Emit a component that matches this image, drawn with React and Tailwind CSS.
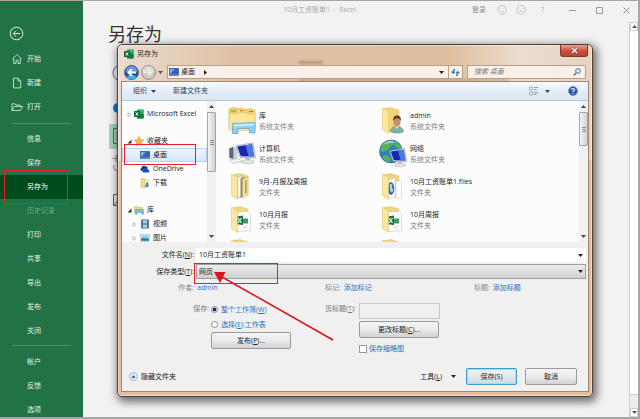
import { useState } from 'react';

const navTop = [
  { label: '开始', icon: 'home' },
  { label: '新建', icon: 'file' },
  { label: '打开', icon: 'open' },
];
const navMain = ['信息', '保存', '另存为', '历史记录', '打印', '共享', '导出', '发布', '关闭'];
const navBottom = ['帐户', '反馈', '选项'];

const files = [
  { name: '库', type: '系统文件夹', icon: 'library' },
  { name: 'admin', type: '系统文件夹', icon: 'user' },
  { name: '计算机', type: '系统文件夹', icon: 'computer' },
  { name: '网络', type: '系统文件夹', icon: 'network' },
  { name: '9月-月报及周报', type: '文件夹', icon: 'folders' },
  { name: '10月工资账单1.files', type: '文件夹', icon: 'web' },
  { name: '10月月报', type: '文件夹', icon: 'excel' },
  { name: '10月周报', type: '文件夹', icon: 'excel' },
];

function Caret({ dir = 'down' }) {
  const paths = { down: 'M0 1h5L2.500 4z', up: 'M0 4h5L2.500 1z', right: 'M1 0v5l3-2.500z' };
  return (
    <svg viewBox="0 0 5 5" className="h-[5px] w-[5px] shrink-0" fill="currentColor">
      <path d={paths[dir]} />
    </svg>
  );
}

function NavIcon({ name }) {
  return (
    <svg viewBox="0 0 12 12" className="h-3 w-3 shrink-0" fill="none" stroke="#c9e6d4" strokeWidth="0.9">
      {name === 'home' && <path d="M1.500 6 6 1.500 10.500 6M2.700 5.200v5.300h2.300V7.300h2v3.200h2.300V5.200" />}
      {name === 'file' && <path d="M2.500 1.200h4.500l2.700 2.700v7H2.500zM7 1.200v2.700h2.700" />}
      {name === 'open' && <path d="M1 9.500V2.800h3l1 1.200h4v1.400M1 9.500 3.300 5.400H11.500L9.300 9.500z" />}
    </svg>
  );
}

function ExcelIcon() {
  return (
    <svg viewBox="0 0 10 10" className="h-[10px] w-[10px] shrink-0">
      <rect x="3" y="0.500" width="6.700" height="9" rx="0.700" fill="#21a366" />
      <path d="M6.300 0.500h2.700a.7.700 0 0 1 .7.700v1.600H6.300z" fill="#33c481" />
      <path d="M3 5h6.700v3.800a.7.700 0 0 1-.7.700H3.700a.7.700 0 0 1-.7-.7z" fill="#107c41" />
      <rect x="0" y="2" width="6" height="6" rx="0.600" fill="#0d6b38" />
      <path d="M1.700 3.300 4.300 6.700M4.300 3.300 1.700 6.700" stroke="#fff" strokeWidth="0.900" />
    </svg>
  );
}

function TreeIcon({ name }) {
  if (name === 'excel') return <ExcelIcon />;
  return (
    <svg viewBox="0 0 10 10" className="h-[10px] w-[10px] shrink-0">
      {name === 'star' && (
        <path d="M5 .5 6.400 3.700 9.800 4 7.200 6.200 8 9.600 5 7.800 2 9.600 2.800 6.200.2 4 3.600 3.700z" fill="#f9b545" stroke="#e08a1c" strokeWidth="0.500" />
      )}
      {name === 'desktop' && (
        <>
          <rect x="0.500" y="1.500" width="9" height="7" fill="#2f62b8" stroke="#1e3f7d" strokeWidth="0.600" />
          <path d="M1 2h5L1 7z" fill="#6d9ce0" />
          <path d="M1.300 3.200h1.400M1.300 5h1.400" stroke="#dce8fa" strokeWidth="0.800" />
          <path d="M.5 8h9" stroke="#8fa6c8" strokeWidth="0.900" />
        </>
      )}
      {name === 'cloud' && (
        <>
          <path d="M1.800 7A1.700 1.700 0 0 1 1.500 3.800 2.600 2.600 0 0 1 6 2.600 2 2 0 0 1 8 4.500L4 5z" fill="#0f3f9c" />
          <path d="M3.600 8.500a1.600 1.600 0 0 1 .2-3.200 2.200 2.200 0 0 1 4.100.1 1.600 1.600 0 0 1 .4 3.100z" fill="#1b4fb5" />
        </>
      )}
      {name === 'download' && (
        <>
          <path d="M1 .8h3.500L6 2v7.500H1z" fill="#f5dc86" stroke="#d6b04c" strokeWidth="0.500" />
          <path d="M4.500 2h3.800v6.500H4.500z" fill="#fbe9a8" stroke="#d6b04c" strokeWidth="0.400" />
          <path d="M6 4.500h2v2.300h1.500L7 9.700 4.500 6.800H6z" fill="#3f8fd6" />
        </>
      )}
      {name === 'library' && (
        <>
          <path d="M.5 1.500h3l.8.800h4.500v5H.5z" fill="#f3d67a" stroke="#d0a94a" strokeWidth="0.400" />
          <path d="M1.500 4.500h8v4.800H7.800V7.500H3.200v1.800H1.500z" fill="#6fbfe0" stroke="#4494bd" strokeWidth="0.400" />
        </>
      )}
      {name === 'video' && (
        <>
          <rect x="1" y="0.500" width="8" height="9" fill="#3d5f78" />
          <path d="M3 1.200h4v3.300H3zM3 5.500h4v3.300H3z" fill="#a9d2e8" />
          <path d="M1.900 1v8M8.100 1v8" stroke="#dfe9ef" strokeWidth="0.700" strokeDasharray="0.900 0.900" />
        </>
      )}
      {name === 'picture' && (
        <>
          <rect x="0.500" y="1.500" width="9" height="7" fill="#fff" stroke="#8fa9ba" strokeWidth="0.500" />
          <rect x="1.300" y="2.300" width="7.400" height="5.400" fill="#8ccdec" />
          <path d="M1.300 5.500c2-1 4 .6 7.400 0v2.200H1.300z" fill="#23769b" />
        </>
      )}
    </svg>
  );
}

function FolderBack() {
  return <path d="M5 2.500 12 1.500 20 4v19L10 26 5 24z" fill="#f0d57d" stroke="#dcbc5e" strokeWidth="0.400" />;
}

function FolderFront() {
  return <path d="M3.500 2 9.500 5.500V27.500L3.500 23.500z" fill="#fbe79d" stroke="#e0bf60" strokeWidth="0.500" />;
}

function Monitor() {
  return (
    <>
      <path d="M8 6.500 25 4 27.500 19 12 18.500z" fill="#d8dee6" stroke="#8f9bab" strokeWidth="0.600" />
      <path d="M9.300 7.500 24 5.300 26 17.500 12.800 17.200z" fill="#1428b0" />
      <path d="M17.500 6.300 24 5.300 26 17.500 20.500 17.300z" fill="#4a78e4" />
      <path d="M17 18.700h5l.5 3.300h-4.500z" fill="#b8c1cc" />
      <ellipse cx="20" cy="22.800" rx="6.500" ry="2" fill="#dfe4e9" stroke="#a0aab6" strokeWidth="0.500" />
    </>
  );
}

function FileIcon({ name }) {
  return (
    <svg viewBox="0 0 28 28" className="h-7 w-7 shrink-0">
      {name === 'library' && (
        <>
          <path d="M1 3 5 1.500 11 3v18H1z" fill="#f1d06c" stroke="#cda548" strokeWidth="0.500" />
          <path d="M9 3.500 13 2 19 3.500v18H9z" fill="#f6da7f" stroke="#cda548" strokeWidth="0.500" />
          <path d="M18 4 22 2.500 27 4.500V22h-9z" fill="#f3d272" stroke="#cda548" strokeWidth="0.500" />
          <path d="M1 7.500h9l1-1h7l1 1.500h8V25L1 24z" fill="#fae69a" stroke="#dab858" strokeWidth="0.500" />
          <path d="M3 5h5M21 5.500h4" stroke="#4d9a4d" strokeWidth="0.900" />
          <path d="M12 4.700h4" stroke="#c85a41" strokeWidth="0.900" />
          <path d="M4.500 17.500 27 16.500V27h-5.500v-4.500H10V27.500H4.500z" fill="#8fd0ee" stroke="#55a3cb" strokeWidth="0.700" />
          <path d="M5.500 18.500 26 17.500v2L5.500 20.500z" fill="#c8ebf8" />
        </>
      )}
      {name === 'user' && (
        <>
          <FolderBack />
          <FolderFront />
          <path d="M11.500 25.500c.4-4 3-5 6.500-5s6 1.500 6.500 5c-3 2-10 2-13 0z" fill="#7fb29f" stroke="#4a8371" strokeWidth="0.500" />
          <ellipse cx="18" cy="15.500" rx="3.500" ry="4.600" fill="#c69066" />
          <path d="M14.300 15c-.5-4 1.300-5.500 3.700-5.500s4.500 1.500 3.800 5.500c-1-2-2-2.800-3.800-2.800s-2.800.8-3.700 2.800z" fill="#57412e" />
          <path d="m16.500 20.500 1.500 2.300 1.500-2.300z" fill="#fff" />
        </>
      )}
      {name === 'computer' && (
        <>
          <path d="m1.500 9.500 4-1.500v12l-4-1.500z" fill="#5b6877" stroke="#3d4650" strokeWidth="0.400" />
          <path d="m5.500 8 4 1v10.500l-4 .5z" fill="#c6ced7" />
          <Monitor />
          <path d="m1 21 9-1.500 5 3-9.500 2z" fill="#eceff2" stroke="#a6afb8" strokeWidth="0.500" />
        </>
      )}
      {name === 'network' && (
        <>
          <circle cx="12" cy="12.500" r="11.500" fill="#2c7fc6" stroke="#1c5c99" strokeWidth="0.500" />
          <path d="M3 6C6 2 10 1 14 2l1 3-4 3-3 4-5 1-2-2zM3 17l5-1 4 4-2 3.500C6 22.500 4 20 3 17zM17 3l4 3 2 4-5-1-3-3z" fill="#55b355" />
          <path d="M4 6c3-4 9-5.500 14-2-5-.5-10 0-14 2z" fill="#c8e6f6" opacity="0.700" />
          <g transform="translate(3.500 6) scale(0.880)">
            <Monitor />
          </g>
        </>
      )}
      {name === 'folders' && (
        <>
          <FolderBack />
          <path d="m10 6 4-2.500v20L10 26z" fill="#fff" stroke="#b5ab8b" strokeWidth="0.500" />
          <path d="m12.500 6.500 4-2v19.500l-4 2z" fill="#8c8672" />
          <path d="m14.500 7 5.500-2v18l-5.500 3z" fill="#f5df95" stroke="#cdae58" strokeWidth="0.500" />
          <path d="m17 8.500 1.500-.5v13l-1.500.5z" fill="#a59c7c" />
          <FolderFront />
        </>
      )}
      {name === 'web' && (
        <>
          <FolderBack />
          <path d="M9 8.500 16 6v19l-7 1.500zM17 9h5.500v17H17z" fill="#fff" stroke="#b9bfc7" strokeWidth="0.500" />
          <ellipse cx="12" cy="16.500" rx="3.300" ry="6.500" fill="#2d6cb1" />
          <path d="M10.500 13c2-3 3.500 0 2.500 1.500s2 2 1 4.500-3 1-3-1z" fill="#a9d2ec" />
          <FolderFront />
        </>
      )}
      {name === 'excel' && (
        <>
          <FolderBack />
          <path d="M9 7 20 6.500l2.500 2.500v16.500L9 26.500z" fill="#fff" stroke="#bcbcb4" strokeWidth="0.500" />
          <path d="M14 13.500h6v5h-6z" fill="#3d9a65" />
          <path d="m8.500 11.500 6.500-1v9.500l-6.500-.8z" fill="#14743f" />
          <path d="m10 13 3.500 5M13.500 13l-3.500 5" stroke="#fff" strokeWidth="1.100" />
          <path d="M15 21h4M15 23h4" stroke="#c9cec9" strokeWidth="0.700" />
          <FolderFront />
        </>
      )}
    </svg>
  );
}

function Sidebar() {
  return (
    <nav className="flex w-[83px] shrink-0 flex-col overflow-hidden bg-[#217346] text-[#e4f1e9]">
      <button aria-label="返回" className="mt-[25px] ml-[9px] h-[15px] w-[15px] shrink-0">
        <svg viewBox="0 0 15 15" className="h-[15px] w-[15px]" fill="none" stroke="#e4f1e9">
          <circle cx="7.500" cy="7.500" r="6.300" />
          <path d="M11 7.500H4.500M7 4.700 4.200 7.500 7 10.300" />
        </svg>
      </button>
      <div className="mt-[6px]">
        {navTop.map((item) => (
          <a key={item.label} href="#" className="flex h-6 items-center gap-[4px] pl-[11px]">
            <NavIcon name={item.icon} />
            {item.label}
          </a>
        ))}
      </div>
      <hr className="mx-3 mt-1 mb-[3px] border-[#439467]" />
      {navMain.map((label) => {
        if (label === '另存为') {
          return (
            <a key={label} href="#" className="relative flex h-6 shrink-0 items-center bg-[#004b1c] pl-[27px] text-white">
              {label}
              <span className="absolute -inset-y-[5px] right-[15px] left-1 z-10 border border-[#e8202a]" />
            </a>
          );
        }
        return (
          <a
            key={label}
            href="#"
            className={
              label === '历史记录'
                ? 'flex h-6 shrink-0 items-center pl-[27px] text-[#6ba585]'
                : 'flex h-6 shrink-0 items-center pl-[27px]'
            }
          >
            {label}
          </a>
        );
      })}
      <hr className="mx-3 mt-[2px] mb-1 border-[#439467]" />
      {navBottom.map((label) => (
        <a key={label} href="#" className="flex h-6 shrink-0 items-center pl-[27px]">
          {label}
        </a>
      ))}
    </nav>
  );
}

function WindowBar() {
  return (
    <header className="flex h-[18px] items-center text-[#a9a9a9]">
      <div className="flex-1 pl-[84px] text-center">10月工资账单1&nbsp; - &nbsp;Excel</div>
      <div className="flex w-[166px] items-center pr-[8px]">
        <a href="#" className="text-[#8f8f8f]">登录</a>
        <svg viewBox="0 0 10 10" className="ml-[11px] h-[10px] w-[10px]" fill="none" stroke="#bdbdbd" strokeWidth="0.800">
          <circle cx="5" cy="5" r="4.400" />
          <path d="M3.300 3.300v.9M6.700 3.300v.9M2.800 6c1 1.700 3.400 1.700 4.400 0" />
        </svg>
        <svg viewBox="0 0 10 10" className="ml-[9px] h-[10px] w-[10px]" fill="none" stroke="#bdbdbd" strokeWidth="0.800">
          <circle cx="5" cy="5" r="4.400" />
          <path d="M3.300 3.300v.9M6.700 3.300v.9M2.800 7.300c1-1.700 3.400-1.700 4.400 0" />
        </svg>
        <button className="ml-[15px]">?</button>
        <span className="flex-1" />
        <button aria-label="最小化">
          <svg viewBox="0 0 7 7" className="h-[7px] w-[7px]" stroke="#9a9a9a"><path d="M0 3.500h7" /></svg>
        </button>
        <button aria-label="最大化" className="mx-5">
          <svg viewBox="0 0 7 7" className="h-[7px] w-[7px]" fill="none" stroke="#9a9a9a"><path d="M.5.5h6v6h-6z" /></svg>
        </button>
        <button aria-label="关闭窗口">
          <svg viewBox="0 0 7 7" className="h-[7px] w-[7px]" stroke="#8a8a8a"><path d="m.5.5 6 6M6.500.5l-6 6" /></svg>
        </button>
      </div>
    </header>
  );
}

// Storage locations, mostly covered by the dialog
function Places() {
  return (
    <div className="ml-[26px] flex w-8 flex-col pt-[17px]">
      <svg viewBox="0 0 32 150" className="h-[150px] w-8" fill="none" stroke="#666">
        <circle cx="12" cy="10" r="8" />
        <circle cx="9" cy="45" r="5" fill="#1e73c8" stroke="none" />
        <path d="M0 61h32v25H0z" fill="#a3d5b9" stroke="none" />
        <path d="M4.500 65.500h12v15h-12zM7 70h3M7 73h3M7 76h3" />
        <path d="M7 92v7M3.500 95.500h7M5 102a4 4 0 0 0 6 5" stroke="#888" />
        <path d="M4.500 131.500h12v11h-12zM5 142l6-7" />
      </svg>
    </div>
  );
}

function PageScrollbar() {
  return (
    <div className="flex w-[9px] flex-col items-center border-l border-[#d0d0d0] bg-[#ededed] text-[#555]">
      <span className="flex h-[9px] w-full items-center justify-center border border-[#d0d0d0] bg-white"><Caret dir="up" /></span>
      <span className="w-full flex-1 border-b border-[#c8c8c8] bg-white" />
      <span className="h-[13px]" />
      <span className="flex h-[9px] w-full items-center justify-center border border-[#d0d0d0] bg-white"><Caret /></span>
    </div>
  );
}

function TitleBar() {
  return (
    <div className="relative flex h-[19px] items-start justify-between">
      <div className="flex h-[18px] items-center gap-[3px] pl-[2px] text-[#222]">
        <ExcelIcon />
        另存为
      </div>
      {/* page text showing through the glass */}
      <span className="absolute bottom-0 left-[38%] h-[3px] w-6 bg-[#8d7059]/50 blur-[1px]" />
      <button aria-label="关闭" className="flex h-[12px] w-7 items-center justify-center rounded-b-[3px] border border-t-0 border-[#7b3a30] bg-linear-to-b from-[#e5a08f] via-[#d4513b] to-[#c0402b]">
        <svg viewBox="0 0 7 7" className="h-[7px] w-[7px]">
          <path d="m1 1 5 5M6 1 1 6" stroke="#5b3530" strokeWidth="2.200" />
          <path d="m1 1 5 5M6 1 1 6" stroke="#fff" strokeWidth="1.400" />
        </svg>
      </button>
    </div>
  );
}

function AddressRow() {
  return (
    <div className="relative flex h-[18px] items-start gap-[4px] pr-[2px]">
      <span className="absolute right-[17%] bottom-px left-[38%] h-[2px] bg-[#8d7059]/40 blur-[1px]" />
      <div className="flex h-4 shrink-0 items-center gap-[2px] pl-[2px] text-[#555]">
        <button aria-label="后退">
          <svg viewBox="0 0 15 15" className="h-[15px] w-[15px]">
            <circle cx="7.500" cy="7.500" r="7" fill="#1d50a3" stroke="#50627c" strokeWidth="0.900" />
            <path d="M1.500 7a6 6 0 0 1 12 0c-4 1.500-8 1.500-12 0z" fill="#6a9adb" />
            <ellipse cx="7.500" cy="12" rx="4.500" ry="2" fill="#39b5ed" />
            <path d="M12 7.500H5M7.800 4.300 4.500 7.500 7.800 10.700" fill="none" stroke="#fff" strokeWidth="1.900" />
          </svg>
        </button>
        <button aria-label="前进">
          <svg viewBox="0 0 15 15" className="h-[15px] w-[15px]">
            <circle cx="7.500" cy="7.500" r="7" fill="#cfc7c0" stroke="#8c8580" strokeWidth="0.900" />
            <path d="M1.500 7a6 6 0 0 1 12 0c-4 1.500-8 1.500-12 0z" fill="#e0dad5" />
            <path d="M3 7.500h7M7.200 4.300l3.300 3.200-3.300 3.200" fill="none" stroke="#f0edea" strokeWidth="1.600" />
          </svg>
        </button>
        <Caret />
      </div>
      <div className="relative mt-px flex h-[14px] flex-1 items-center border border-[#b89f8a] bg-[#f8f0e9] text-[#222]">
        <span className="flex flex-1 items-center gap-[2px] pl-px">
          <TreeIcon name="desktop" />
          桌面
          <span className="ml-[6px]"><Caret dir="right" /></span>
        </span>
        <button aria-label="历史位置" className="px-1"><Caret /></button>
        <button aria-label="刷新" className="flex h-full w-[14px] items-center justify-center border-l border-[#b89f8a]">
          <svg viewBox="0 0 10 10" className="h-[9px] w-[9px]" fill="none" stroke="#2a7dbb" strokeWidth="1.300">
            <path d="M4.500 1.500C2.500 1.500 2.500 3 2.500 5.500M.7 4l1.800 2 1.800-2M5.500 8.500c2 0 2-1.500 2-4M5.700 6l1.800-2 1.800 2" />
          </svg>
        </button>
      </div>
      <div className="relative mt-px flex h-[14px] w-[119px] shrink-0 items-center border border-[#b89f8a] bg-[#f8f0e9] pr-1">
        <input aria-label="搜索" placeholder="搜索 桌面" className="min-w-0 flex-1 bg-transparent pl-[6px] italic outline-none placeholder:text-[#777]" />
        <svg viewBox="0 0 8 8" className="h-2 w-2" fill="none" stroke="#3178b5">
          <circle cx="5" cy="3" r="2.300" />
          <path d="M3.300 4.700.6 7.400" strokeWidth="1.400" />
        </svg>
      </div>
    </div>
  );
}

function Toolbar() {
  return (
    <div className="flex h-[19px] items-center border-b border-[#b7c8da] bg-linear-to-b from-[#f7fafe] via-[#e4edf8] to-[#dbe7f5] pr-[10px] pl-[11px] text-[#34475e]">
      <button className="flex items-center gap-1">组织 <Caret /></button>
      <button className="ml-[17px] flex-1 text-left">新建文件夹</button>
      <button aria-label="更改视图" className="mr-[18px] flex items-center gap-[6px]">
        <svg viewBox="0 0 11 10" className="h-[10px] w-[11px]" fill="none">
          <path d="M1.500 1h3v3h-3zM1.500 6h3v3h-3z" fill="#e8f2ea" stroke="#869aa8" strokeWidth="0.700" />
          <path d="M6 1.500h4M6 3.500h2.500M6 6.500h4M6 8.500h2.500" stroke="#72889b" strokeWidth="0.800" />
        </svg>
        <Caret />
      </button>
      <button aria-label="帮助">
        <svg viewBox="0 0 10 10" className="h-[10px] w-[10px]" fill="none">
          <circle cx="5" cy="5" r="4.500" fill="#2554a8" stroke="#7d93b6" strokeWidth="0.800" />
          <path d="M3.500 4c0-2 3-2 3 0 0 1-1.500 1-1.500 2M5 7v1" stroke="#fff" strokeWidth="1.100" />
        </svg>
      </button>
    </div>
  );
}

function PaneScrollbar({ long }) {
  return (
    <div className="flex w-[9px] shrink-0 flex-col items-center bg-[#f1f1f1] text-[#444]">
      <span className="flex h-[11px] items-center"><Caret dir="up" /></span>
      <span
        className={
          long
            ? 'flex h-[60px] w-full items-center justify-center rounded-[1px] border border-[#a5a5a5] bg-linear-to-r from-[#f5f5f5] to-[#d2d2d2]'
            : 'flex h-[34px] w-full items-center justify-center rounded-[1px] border border-[#a5a5a5] bg-linear-to-r from-[#f5f5f5] to-[#d2d2d2]'
        }
      >
        <svg viewBox="0 0 4 5" className="h-[5px] w-1" stroke="#777" strokeWidth="0.800"><path d="M0 .5h4M0 2.500h4M0 4.500h4" /></svg>
      </span>
      <span className="flex-1" />
      <span className="flex h-[11px] items-center"><Caret /></span>
    </div>
  );
}

function Twisty({ open }) {
  return (
    <svg viewBox="0 0 5 5" className="h-[5px] w-[5px] shrink-0" strokeWidth="0.600">
      {open ? <path d="M4.500.5v4h-4z" fill="#333" /> : <path d="m1 .5 3 2-3 2z" fill="#fff" stroke="#999" />}
    </svg>
  );
}

function Tree() {
  return (
    <div className="flex w-[94px] shrink-0 bg-[#fcfcfc]">
      <div className="min-w-0 flex-1 pt-[6px] whitespace-nowrap text-[#222]">
        <div className="flex h-[14px] items-center gap-[2px] pl-[5px]"><Twisty /><TreeIcon name="excel" /><span className="pl-px">Microsoft Excel</span></div>
        <div className="mt-[13px] flex h-[14px] items-center gap-[2px] pl-[5px]"><Twisty open /><TreeIcon name="star" /><span className="pl-px">收藏夹</span></div>
        <div className="relative flex h-[14px] items-center gap-[3px] border border-[#b5d3f0] bg-linear-to-b from-[#eef5fd] to-[#d5e7fa] pl-[17px]">
          <TreeIcon name="desktop" />
          桌面
          <span className="absolute -top-[5px] left-px z-10 h-[21px] w-[72px] border border-[#e8202a]" />
        </div>
        <div className="flex h-[14px] items-center gap-[3px] pl-[18px]"><TreeIcon name="cloud" />OneDrive</div>
        <div className="flex h-[14px] items-center gap-[3px] pl-[18px]"><TreeIcon name="download" />下载</div>
        <div className="mt-[13px] flex h-[14px] items-center gap-[2px] pl-[5px]"><Twisty open /><TreeIcon name="library" /><span className="pl-px">库</span></div>
        <div className="flex h-[14px] items-center gap-[3px] pl-[10px]"><Twisty /><TreeIcon name="video" />视频</div>
        <div className="flex h-[14px] items-center gap-[3px] pl-[10px]"><Twisty /><TreeIcon name="picture" />图片</div>
      </div>
      <PaneScrollbar long />
    </div>
  );
}

function FileList() {
  return (
    <div className="flex min-w-0 flex-1 bg-[#fcfcfc]">
      <div className="grid flex-1 auto-rows-[33px] grid-cols-[151px_1fr] content-start overflow-hidden pt-[5px] pl-[12px]">
        {files.map((f) => (
          <a key={f.name} href="#" className="flex items-start gap-[3px]">
            <FileIcon name={f.icon} />
            <span className="flex flex-col pt-[4px] leading-[11px]">
              <span className="text-[#1c1c1c]">{f.name}</span>
              <span className="text-[#808080]">{f.type}</span>
            </span>
          </a>
        ))}
        {/* next row, scrolled out of view */}
        <FileIcon name="folders" />
        <FileIcon name="folders" />
      </div>
      <PaneScrollbar />
    </div>
  );
}

const buttonStyle =
  'flex items-center justify-center border border-[#9a9a9a] rounded-[2px] bg-linear-to-b from-[#f4f4f4] via-[#ebebeb] to-[#d2d2d2] text-[#222]';
const radioStyle =
  'h-[7px] w-[7px] appearance-none rounded-full border border-[#8a8a8a] bg-white checked:bg-[radial-gradient(circle,#16324a_45%,#dce9f2_60%)]';

function SaveForm() {
  const [name, setName] = useState('10月工资账单1');
  const [scope, setScope] = useState('book');

  return (
    <form className="bg-[#f0f0f0] pt-[6px] pb-[6px] text-[#222]">
      <div className="flex items-center gap-[2px] pr-[2px]">
        <label htmlFor="name" className="w-[72px] text-right">文件名(<u>N</u>):</label>
        <div className="flex h-[14px] flex-1 items-center bg-white pr-[3px]">
          <input id="name" value={name} onChange={(e) => setName(e.target.value)} className="min-w-0 flex-1 bg-transparent pl-[3px] outline-none" />
          <button type="button" aria-label="以前的文件名"><Caret /></button>
        </div>
      </div>
      <div className="mt-[2px] flex items-center gap-[2px] pr-[2px]">
        <label htmlFor="type" className="w-[72px] text-right">保存类型(<u>T</u>):</label>
        <div className="relative h-[15px] flex-1 border border-[#a0a0a0] bg-linear-to-b from-[#ededed] to-[#d0d0d0]">
          <select id="type" className="block h-[13px] w-full appearance-none bg-transparent pl-[2px] outline-none">
            <option>网页</option>
          </select>
          <span className="pointer-events-none absolute top-1 right-[2px]"><Caret /></span>
          <span className="pointer-events-none absolute -top-[2px] -left-[3px] z-10 h-[21px] w-[84px] border border-[#e8202a]" />
          <svg viewBox="0 0 126 74" className="pointer-events-none absolute top-[4px] left-[12px] z-10 h-[74px] w-[126px]">
            <path d="M13 8 124 71" stroke="#d8141c" strokeWidth="1.600" />
            <path d="M5 3 16.500 3 11 14z" fill="#d8141c" />
          </svg>
        </div>
      </div>
      <div className="mt-[2px] grid h-[14px] grid-cols-[203fr_149fr_114fr] items-center text-[#888]">
        <div className="flex gap-[3px]"><span className="w-[72px] text-right">作者:</span><a href="#" className="text-[#2a72bd]">admin</a></div>
        <div className="flex gap-[3px]">标记:<a href="#" className="text-[#2a72bd]">添加标记</a></div>
        <div className="flex gap-[3px]">标题:<a href="#" className="text-[#2a72bd]">添加标题</a></div>
      </div>
      <div className="mt-[7px] grid grid-cols-[203fr_263fr] text-[#777]">
        <div className="flex gap-[2px]">
          <span className="w-[87px] text-right leading-[14px]">保存:</span>
          <div className="text-[#2a72bd]">
            <label className="flex h-[15px] items-center gap-[3px]">
              <input type="radio" name="scope" className={radioStyle} checked={scope === 'book'} onChange={() => setScope('book')} />
              <span>整个工作簿(<u>W</u>)</span>
            </label>
            <label className="flex h-[15px] items-center gap-[3px]">
              <input type="radio" name="scope" className={radioStyle} checked={scope === 'sheet'} onChange={() => setScope('sheet')} />
              <span>选择(<u>E</u>):工作表</span>
            </label>
            <button type="button" className={`${buttonStyle} h-[17px] w-20`}>发布(<u>P</u>)...</button>
          </div>
        </div>
        <div className="flex gap-[3px]">
          <label htmlFor="title" className="w-[31px] leading-[14px] whitespace-nowrap">页标题(<u>T</u>):</label>
          <div className="pt-px">
            <input id="title" disabled className="block h-4 w-[81px] border border-[#c8c8c8] bg-[#f0f0f0]" />
            <button type="button" className={`${buttonStyle} mt-[2px] h-[17px] w-20`}>更改标题(<u>C</u>)...</button>
            <label className="mt-1 flex h-[14px] items-center gap-[2px] text-[#2a72bd]">
              <input type="checkbox" className="h-2 w-2 appearance-none border border-[#9a9a9a] bg-white" />
              保存缩略图
            </label>
          </div>
        </div>
      </div>
      <div className="mt-3 flex items-center pr-[11px] pl-[7px]">
        <button type="button" className="flex items-center gap-[3px]">
          <svg viewBox="0 0 9 9" className="h-[9px] w-[9px]">
            <circle cx="4.500" cy="4.500" r="4" fill="#e3eaf3" stroke="#8ea4c0" strokeWidth="0.700" />
            <path d="M2.500 5.700 4.500 3.300 6.500 5.700z" fill="#29416b" />
          </svg>
          隐藏文件夹
        </button>
        <span className="flex-1" />
        <button type="button" className="mr-[10px] flex items-center gap-[9px]"><span>工具(<u>L</u>)</span><Caret /></button>
        <button type="button" className="mr-2 flex h-[17px] w-[51px] items-center justify-center rounded-[2px] border border-[#3a9fd0] bg-linear-to-b from-[#f2f6f8] to-[#cfdbe1] ring-1 ring-[#9fdcf5] ring-inset">保存(S)</button>
        <button type="button" className={`${buttonStyle} h-[17px] w-[52px]`}>取消</button>
      </div>
    </form>
  );
}

function SaveDialog() {
  return (
    <div role="dialog" aria-label="另存为" className="rounded-[5px] border border-[#4a3f39] bg-[linear-gradient(to_bottom,transparent_115px,#e6bd9b_116px),linear-gradient(to_right,#eadbce,#e0c1a6_25%,#dfbf9f_70%,#ecdccf_85%,#e8d3c2)] px-1 pb-[5px] shadow-[2px_3px_8px_2px_rgba(0,0,0,0.550),inset_0_0_0_1px_rgba(255,255,255,0.450)]">
      <TitleBar />
      <AddressRow />
      <div className="ring-1 ring-[#9f8773]">
        <Toolbar />
        <div className="flex h-[141px]">
          <Tree />
          <FileList />
        </div>
        <SaveForm />
      </div>
    </div>
  );
}

export default function App() {
  return (
    <div className="flex h-screen overflow-hidden border-t border-r-2 border-b-2 border-[#a6a6a6] bg-[#f2f2f2] font-['Open_Sans','Noto_Sans_CJK_SC',sans-serif] text-[7px] leading-[10px]">
      <Sidebar />
      <div className="relative flex min-w-0 flex-1 flex-col">
        <WindowBar />
        <div className="mt-[3px] flex min-h-0 flex-1">
          <main className="flex-1">
            <h1 className="pl-[25px] text-[18px] leading-[24px] text-[#333]">另存为</h1>
            <Places />
          </main>
          <PageScrollbar />
        </div>
        <div className="absolute inset-x-0 top-[43px] pr-[45px] pl-[34px]">
          <SaveDialog />
        </div>
      </div>
    </div>
  );
}
